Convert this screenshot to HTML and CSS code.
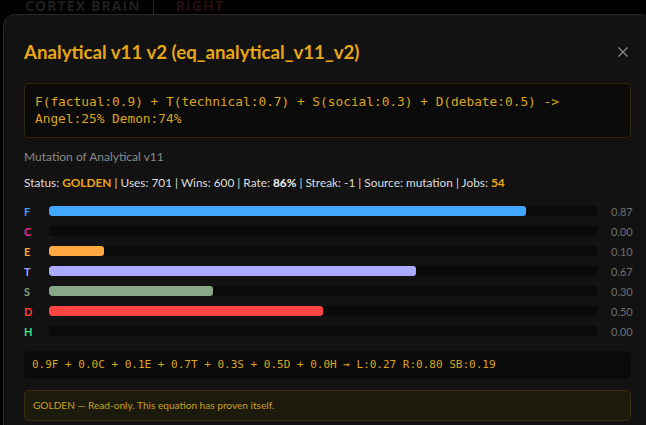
FILE: index.html
```html
<!DOCTYPE html>
<html>
<head>
<meta charset="utf-8">
<link rel="stylesheet" href="styles.css">
</head>
<body>
<div class="backdrop">
  <div class="topbar">
    <span class="brand">CORTEX BRAIN</span>
    <span class="sep"></span>
    <span class="side">RIGHT</span>
  </div>
</div>
<div class="modal">
  <div class="head">
    <h2 class="title">Analytical v11 v2 (eq_analytical_v11_v2)</h2>
    <button class="close" aria-label="Close">
      <svg width="12" height="12" viewBox="0 0 12 12"><path d="M1.5 1.5 L10.5 10.5 M10.5 1.5 L1.5 10.5" stroke="#8a8a8a" stroke-width="1.3" fill="none"/></svg>
    </button>
  </div>
  <div class="formula">F(factual:0.9) + T(technical:0.7) + S(social:0.3) + D(debate:0.5) -><br>Angel:25% Demon:74%</div>
  <div class="parent">Mutation of Analytical v11</div>
  <div class="status">Status: <b class="gold">GOLDEN</b> | Uses: 701 | Wins: 600 | Rate: <b>86%</b> | Streak: -1 | Source: mutation | Jobs: <b class="gold">54</b></div>
  <div class="bars">
    <div class="row"><span class="k kf">F</span><div class="track"><div class="fill ff" style="width:87%"></div></div><span class="v">0.87</span></div>
    <div class="row"><span class="k kc">C</span><div class="track"><div class="fill fc" style="width:0%"></div></div><span class="v">0.00</span></div>
    <div class="row"><span class="k ke">E</span><div class="track"><div class="fill fe" style="width:10%"></div></div><span class="v">0.10</span></div>
    <div class="row"><span class="k kt">T</span><div class="track"><div class="fill ft" style="width:67%"></div></div><span class="v">0.67</span></div>
    <div class="row"><span class="k ks">S</span><div class="track"><div class="fill fs" style="width:30%"></div></div><span class="v">0.30</span></div>
    <div class="row"><span class="k kd">D</span><div class="track"><div class="fill fd" style="width:50%"></div></div><span class="v">0.50</span></div>
    <div class="row"><span class="k kh">H</span><div class="track"><div class="fill fh" style="width:0%"></div></div><span class="v">0.00</span></div>
  </div>
  <div class="compact">0.9F + 0.0C + 0.1E + 0.7T + 0.3S + 0.5D + 0.0H → L:0.27 R:0.80 SB:0.19</div>
  <div class="notice">GOLDEN — Read-only. This equation has proven itself.</div>
</div>
</body>
</html>
```
FILE: styles.css
```css
html, body {
  margin: 0;
  padding: 0;
  background: #000;
  height: 100%;
  overflow: hidden;
}
body {
  font-family: "Lato", "Open Sans", sans-serif;
  position: relative;
}
.topbar {
  display: flex;
  align-items: flex-start;
  height: 14px;
  padding-left: 25px;
  overflow: hidden;
}
.brand {
  font-family: "Open Sans", sans-serif;
  font-weight: 700;
  font-size: 14px;
  letter-spacing: 1.1px;
  color: #1f1f1f;
  line-height: 12px;
}
.sep {
  width: 1px;
  height: 14px;
  background: #2a2a2a;
  margin: 0 22px 0 12px;
}
.side {
  font-family: "Open Sans", sans-serif;
  font-weight: 700;
  font-size: 14px;
  letter-spacing: 1.1px;
  color: #2a0f10;
  line-height: 12px;
}
.modal {
  position: absolute;
  left: 3px;
  top: 14px;
  width: 607px;
  height: 440px;
  padding: 24px 20px 0 20px;
  background: #121212;
  border: 1px solid #2a2a2a;
  border-radius: 12px 12px 0 0;
}
.head {
  display: flex;
  align-items: center;
  justify-content: space-between;
  height: 26px;
}
.title {
  margin: 0;
  font-size: 18.7px;
  line-height: 26px;
  font-weight: 700;
  color: #e8a617;
}
.close {
  background: none;
  border: 0;
  padding: 0;
  margin-right: 2px;
  width: 12px;
  height: 12px;
  display: flex;
}
.formula {
  margin-top: 18px;
  background: #0a0a0a;
  border: 1px solid #33260c;
  border-radius: 5px;
  padding: 10px 10px;
  font-family: "DejaVu Sans Mono", monospace;
  font-size: 12.8px;
  line-height: 16.5px;
  color: #dba51e;
}
.parent {
  margin-top: 11px;
  font-size: 12px;
  line-height: 16px;
  color: #8a8a8a;
}
.status {
  margin-top: 10px;
  font-size: 11.85px;
  line-height: 16px;
  color: #dedede;
}
.status b { font-weight: 700; color: #f0f0f0; }
.status b.gold { color: #e8a617; }
.bars {
  margin-top: 10px;
  display: flex;
  flex-direction: column;
}
.row {
  display: flex;
  align-items: center;
  height: 20px;
}
.k {
  width: 25px;
  font-size: 11px;
  font-weight: 700;
}
.kf { color: #3f9cf0; }
.kc { color: #e8309a; }
.ke { color: #ffa63d; }
.kt { color: #9aa2ff; }
.ks { color: #86a684; }
.kd { color: #ff3d3d; }
.kh { color: #3ddf86; }
.track {
  flex: 1;
  height: 10px;
  background: #0a0a0a;
  border-radius: 3px;
  overflow: hidden;
}
.fill {
  height: 100%;
  border-radius: 3px;
}
.ff { background: #42a8ff; }
.fe { background: #ffa940; }
.ft { background: #aaaaff; }
.fs { background: #88a888; }
.fd { background: #ff4444; }
.v {
  width: 20px;
  padding-left: 14px;
  font-size: 11px;
  color: #6e6e6e;
}
.compact {
  margin-top: 10px;
  background: #0a0a0a;
  border-radius: 5px;
  padding: 6px 8px;
  font-family: "DejaVu Sans Mono", monospace;
  font-size: 11px;
  line-height: 16px;
  color: #dba51e;
}
.notice {
  margin-top: 11px;
  background: #1b1a0c;
  border: 1px solid #382e0e;
  border-radius: 5px;
  padding: 7px 8px;
  font-size: 10.1px;
  line-height: 15px;
  color: #c9a01e;
}
```
